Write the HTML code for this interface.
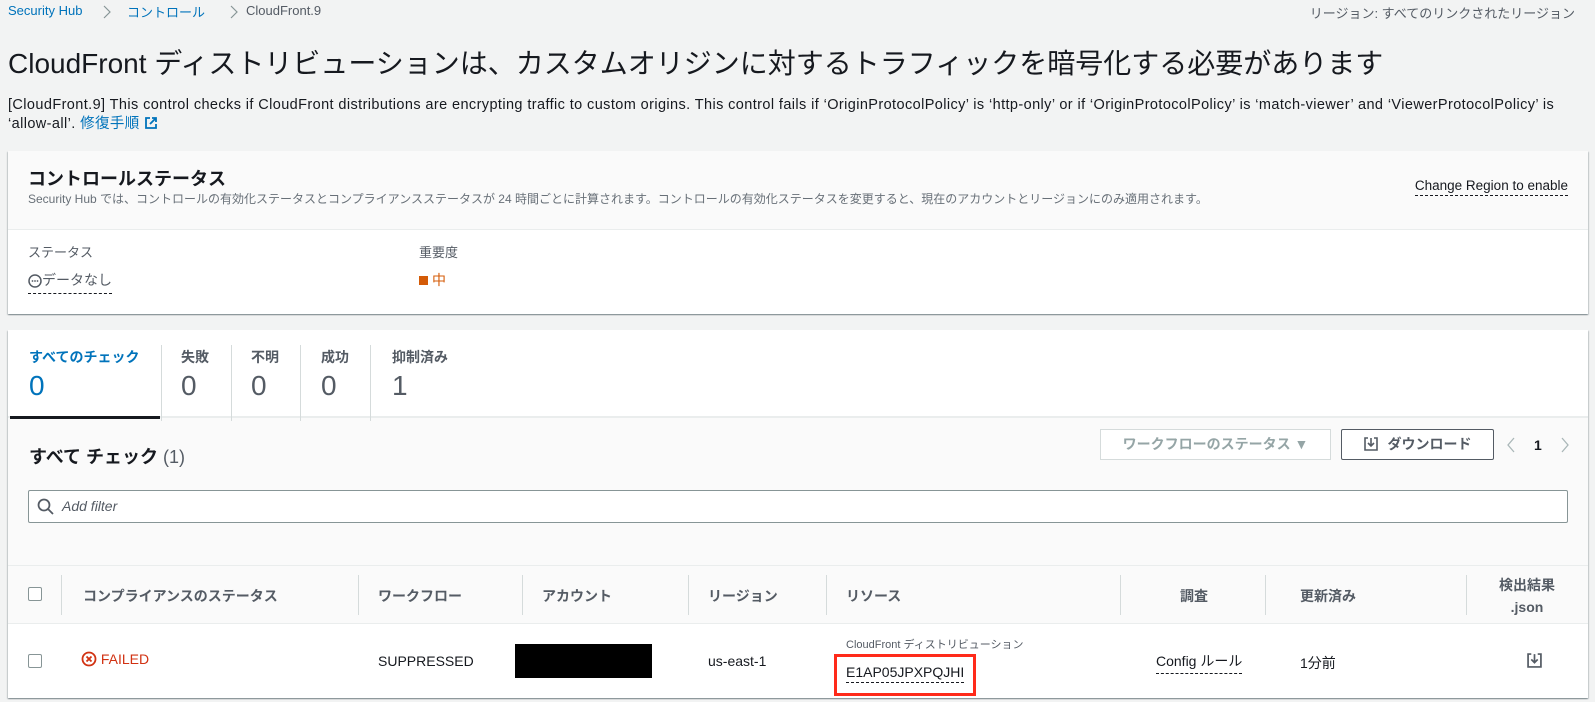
<!DOCTYPE html>
<html><head><meta charset="utf-8"><style>
*{box-sizing:border-box;margin:0;padding:0}
body{width:1595px;height:702px;overflow:hidden;background:#f2f3f3;font-family:"Liberation Sans","Noto Sans CJK JP",sans-serif;color:#16191f;position:relative}
.a{position:absolute;white-space:nowrap}
.blue{color:#0073bb}
.panel{position:absolute;left:8px;width:1580px;background:#fff;box-shadow:0 1px 1px rgba(0,28,36,.3),1px 1px 1px rgba(0,28,36,.15),-1px 1px 1px rgba(0,28,36,.15)}
.dash{border-bottom:1px dashed #16191f}
.sep{position:absolute;width:1px;background:#d5dbdb}
.cb{position:absolute;width:14px;height:14px;border:1.5px solid #879596;border-radius:2px;background:#fff}
.th{font-weight:bold;font-size:14px;color:#545b64}
</style></head><body>
<div class="a blue" style="left:8px;top:3px;font-size:13px">Security Hub</div>
<svg class="a" style="left:102px;top:5px" width="10" height="14" viewBox="0 0 10 14"><path d="M2 1l6 6-6 6" fill="none" stroke="#879596" stroke-width="1.2"/></svg>
<div class="a blue" style="left:127px;top:2px;font-size:13px">コントロール</div>
<svg class="a" style="left:229px;top:5px" width="10" height="14" viewBox="0 0 10 14"><path d="M2 1l6 6-6 6" fill="none" stroke="#879596" stroke-width="1.2"/></svg>
<div class="a" style="left:246px;top:3px;font-size:13px;color:#545b64">CloudFront.9</div>
<div class="a" style="right:20px;top:3px;font-size:13px;color:#545b64">リージョン: すべてのリンクされたリージョン</div>

<div class="a" style="left:8px;top:42px;font-size:28px">CloudFront ディストリビューションは、カスタムオリジンに対するトラフィックを暗号化する必要があります</div>
<div class="a" style="left:8px;top:96px;font-size:14.5px;line-height:19px;letter-spacing:0.4px">[CloudFront.9] This control checks if CloudFront distributions are encrypting traffic to custom origins. This control fails if ‘OriginProtocolPolicy’ is ‘http-only’ or if ‘OriginProtocolPolicy’ is ‘match-viewer’ and ‘ViewerProtocolPolicy’ is<br>‘allow-all’. <span class="blue">修復手順 <svg width="14" height="14" viewBox="0 0 14 14" style="vertical-align:-2px"><path d="M6 2H2v10h10V8M8 2h4v4M12 2L6 8" fill="none" stroke="#0073bb" stroke-width="1.8"/></svg></span></div>

<div class="panel" style="top:151px;height:163px">
  <div style="height:79px;background:#fafafa;border-bottom:1px solid #eaeded"></div>
  <div class="a" style="left:20px;top:14px;font-size:18px;font-weight:bold">コントロールステータス</div>
  <div class="a" style="left:20px;top:39px;font-size:12px;color:#687078">Security Hub では、コントロールの有効化ステータスとコンプライアンスステータスが 24 時間ごとに計算されます。コントロールの有効化ステータスを変更すると、現在のアカウントとリージョンにのみ適用されます。</div>
  <div class="a dash" style="right:20px;top:27px;font-size:13.5px;padding-bottom:2px">Change Region to enable</div>
  <div class="a" style="left:20px;top:91px;font-size:13px;color:#545b64">ステータス</div>
  <div class="a dash" style="left:20px;top:119px;font-size:14px;color:#545b64;padding-bottom:3px"><svg width="14" height="14" viewBox="0 0 14 14" style="vertical-align:-3px"><circle cx="7" cy="7" r="6" fill="none" stroke="#545b64" stroke-width="1.5"/><circle cx="4.5" cy="7" r=".9" fill="#545b64"/><circle cx="7" cy="7" r=".9" fill="#545b64"/><circle cx="9.5" cy="7" r=".9" fill="#545b64"/></svg>データなし</div>
  <div class="a" style="left:411px;top:91px;font-size:13px;color:#545b64">重要度</div>
  <div class="a" style="left:411px;top:119px;font-size:14px;color:#d45b07"><span style="display:inline-block;width:9px;height:9px;background:#d45b07;margin-right:4px"></span>中</div>
</div>

<div class="panel" style="top:330px;height:368px;background:#fafafa">
  <div style="height:88px;background:#fff;border-bottom:2px solid #eaeded"></div>
  <div class="a" style="left:2px;top:86px;width:150px;height:3px;background:#16191f"></div>
  <div class="sep" style="left:153px;top:15px;height:76px"></div>
  <div class="sep" style="left:223px;top:15px;height:76px"></div>
  <div class="sep" style="left:292px;top:15px;height:76px"></div>
  <div class="sep" style="left:362px;top:15px;height:76px"></div>
  <div class="a blue" style="left:21px;top:17px;font-size:14px;font-weight:bold">すべてのチェック</div>
  <div class="a blue" style="left:21px;top:40px;font-size:28px">0</div>
  <div class="a" style="left:173px;top:17px;font-size:14px;font-weight:bold;color:#545b64">失敗</div>
  <div class="a" style="left:173px;top:40px;font-size:28px;color:#545b64">0</div>
  <div class="a" style="left:243px;top:17px;font-size:14px;font-weight:bold;color:#545b64">不明</div>
  <div class="a" style="left:243px;top:40px;font-size:28px;color:#545b64">0</div>
  <div class="a" style="left:313px;top:17px;font-size:14px;font-weight:bold;color:#545b64">成功</div>
  <div class="a" style="left:313px;top:40px;font-size:28px;color:#545b64">0</div>
  <div class="a" style="left:384px;top:17px;font-size:14px;font-weight:bold;color:#545b64">抑制済み</div>
  <div class="a" style="left:384px;top:40px;font-size:28px;color:#545b64">1</div>

  <div class="a" style="left:21px;top:113px;font-size:18px;font-weight:bold">すべて チェック <span style="font-weight:normal;color:#545b64">(1)</span></div>
  <div class="a" style="left:1092px;top:99px;width:231px;height:31px;border:1px solid #d5dbdb;background:#fff;font-size:14px;font-weight:bold;color:#95a5a6;text-align:center;line-height:29px">ワークフローのステータス ▼</div>
  <div class="a" style="left:1333px;top:99px;width:153px;height:31px;border:1px solid #545b64;border-radius:2px;background:#fff;font-size:14px;font-weight:bold;color:#545b64;text-align:center;line-height:29px"><svg width="14" height="14" viewBox="0 0 14 14" style="vertical-align:-2px;margin-right:10px"><path d="M4 1H1v12h12V1h-3M7 1v8M4 6l3 3 3-3" fill="none" stroke="#545b64" stroke-width="1.6"/></svg>ダウンロード</div>
  <svg class="a" style="left:1498px;top:107px" width="10" height="16" viewBox="0 0 10 16"><path d="M8 1L2 8l6 7" fill="none" stroke="#aab7b8" stroke-width="1.3"/></svg>
  <div class="a" style="left:1526px;top:107px;font-size:14px;font-weight:bold">1</div>
  <svg class="a" style="left:1552px;top:107px" width="10" height="16" viewBox="0 0 10 16"><path d="M2 1l6 7-6 7" fill="none" stroke="#aab7b8" stroke-width="1.3"/></svg>

  <div class="a" style="left:20px;top:160px;width:1540px;height:33px;border:1px solid #879596;border-radius:2px;background:#fff"></div>
  <svg class="a" style="left:29px;top:168px" width="17" height="17" viewBox="0 0 17 17"><circle cx="7" cy="7" r="5.5" fill="none" stroke="#545b64" stroke-width="1.8"/><path d="M11 11l5 5" stroke="#545b64" stroke-width="1.8"/></svg>
  <div class="a" style="left:54px;top:168px;font-size:14px;font-style:italic;color:#545b64">Add filter</div>

  <div class="a" style="left:0;top:235px;width:1580px;height:1px;background:#eaeded"></div>
  <div class="a" style="left:0;top:293px;width:1580px;height:75px;background:#fff;border-top:1px solid #eaeded"></div>
  <div class="sep" style="left:53px;top:245px;height:40px"></div>
  <div class="sep" style="left:350px;top:245px;height:40px"></div>
  <div class="sep" style="left:514px;top:245px;height:40px"></div>
  <div class="sep" style="left:680px;top:245px;height:40px"></div>
  <div class="sep" style="left:818px;top:245px;height:40px"></div>
  <div class="sep" style="left:1112px;top:245px;height:40px"></div>
  <div class="sep" style="left:1257px;top:245px;height:40px"></div>
  <div class="sep" style="left:1458px;top:245px;height:40px"></div>
  <div class="cb" style="left:20px;top:257px"></div>
  <div class="a th" style="left:75px;top:256px">コンプライアンスのステータス</div>
  <div class="a th" style="left:370px;top:256px">ワークフロー</div>
  <div class="a th" style="left:534px;top:256px">アカウント</div>
  <div class="a th" style="left:700px;top:256px">リージョン</div>
  <div class="a th" style="left:838px;top:256px">リソース</div>
  <div class="a th" style="left:1172px;top:256px">調査</div>
  <div class="a th" style="left:1292px;top:256px">更新済み</div>
  <div class="a th" style="left:1491px;top:244px;text-align:center;line-height:22px">検出結果<br>.json</div>

  <div class="cb" style="left:20px;top:324px"></div>
  <div class="a" style="left:73px;top:321px;font-size:14px;color:#d13212"><svg width="16" height="16" viewBox="0 0 16 16" style="vertical-align:-3px"><circle cx="8" cy="8" r="6.5" fill="none" stroke="#d13212" stroke-width="1.8"/><path d="M5.5 5.5l5 5M10.5 5.5l-5 5" stroke="#d13212" stroke-width="1.8"/></svg> FAILED</div>
  <div class="a" style="left:370px;top:323px;font-size:14px">SUPPRESSED</div>
  <div class="a" style="left:507px;top:314px;width:137px;height:34px;background:#000"></div>
  <div class="a" style="left:700px;top:323px;font-size:14px">us-east-1</div>
  <div class="a" style="left:838px;top:306px;font-size:11px;color:#545b64">CloudFront ディストリビューション</div>
  <div class="a" style="left:826px;top:324px;width:142px;height:42px;border:3px solid #ff2a1a"></div>
  <div class="a dash" style="left:838px;top:334px;font-size:14px;padding-bottom:2px">E1AP05JPXPQJHI</div>
  <div class="a dash" style="left:1148px;top:321px;font-size:14px;padding-bottom:2px">Config ルール</div>
  <div class="a" style="left:1292px;top:323px;font-size:14px">1分前</div>
  <svg class="a" style="left:1519px;top:323px" width="15" height="15" viewBox="0 0 14 14"><path d="M4 1H1v12h12V1h-3M7 1v8M4 6l3 3 3-3" fill="none" stroke="#545b64" stroke-width="1.6"/></svg>
</div>
</body></html>
